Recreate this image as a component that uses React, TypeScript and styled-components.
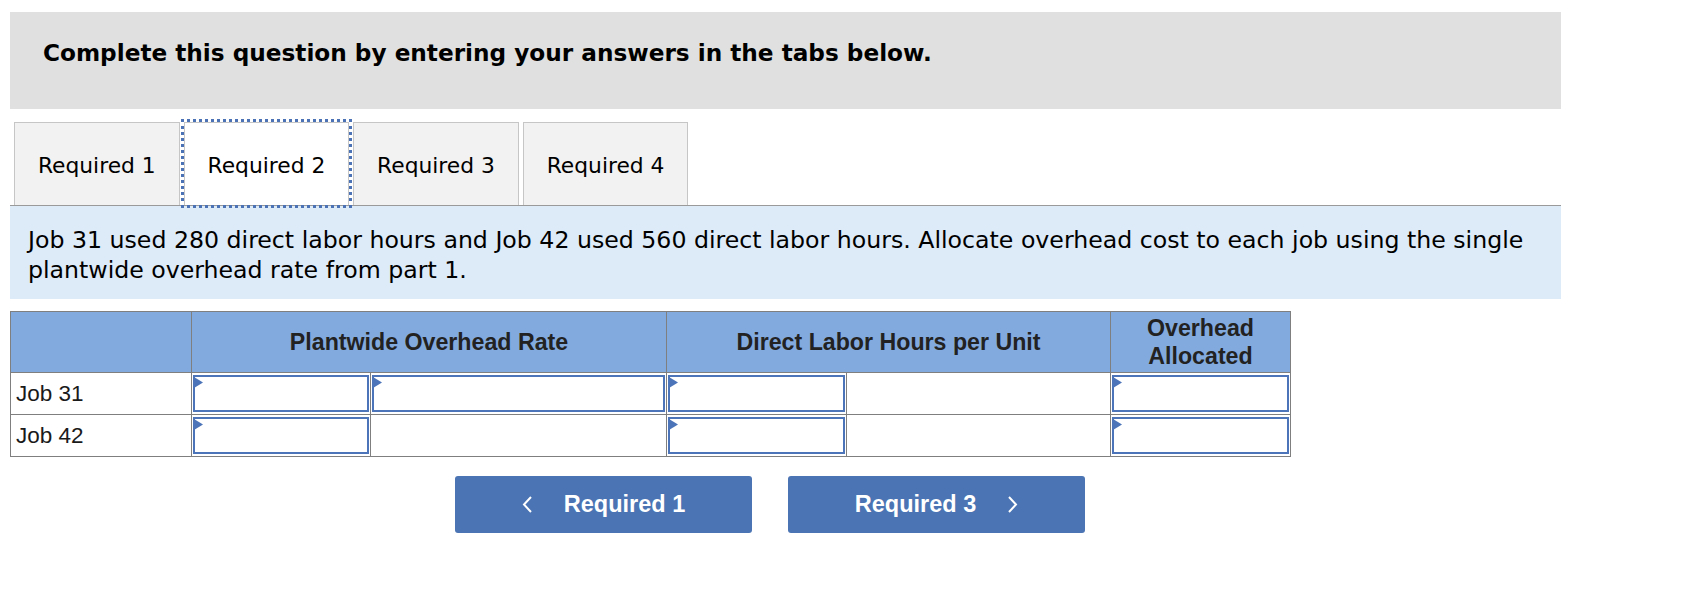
import React from 'react'
import styled, { createGlobalStyle } from 'styled-components'

const GlobalStyle = createGlobalStyle`
  html, body {
    margin: 0;
    padding: 0;
    background: #ffffff;
  }
  body {
    font-family: "DejaVu Sans", Verdana, sans-serif;
    color: #000000;
  }
`

const Page = styled.div`
  padding: 12px 0 40px 10px;
  width: 1551px;
`

const Prompt = styled.div`
  height: 97px;
  box-sizing: border-box;
  background: #e0e0e0;
  padding: 27px 0 0 33px;
  font-family: "DejaVu Sans", Verdana, sans-serif;
  font-weight: bold;
  font-size: 23.2px;
`

const TabBar = styled.div`
  display: flex;
  gap: 4px;
  padding-left: 4px;
  margin-top: 13px;
`

const Tab = styled.button<{ $active?: boolean }>`
  position: relative;
  z-index: 1;
  width: 165.6px;
  height: 83px;
  box-sizing: border-box;
  padding: 2px 0 0;
  border: 1px solid #c6c6c6;
  border-bottom: none;
  background: ${p => (p.$active ? '#ffffff' : '#f2f2f2')};
  outline: ${p => (p.$active ? '3px dotted #4a72b4' : 'none')};
  font-family: "DejaVu Sans", Verdana, sans-serif;
  font-size: 21.8px;
  color: #000000;
  cursor: pointer;
`

const Instructions = styled.div`
  border-top: 1px solid #9a9a9a;
  background: #ddeaf7;
  padding: 19px 16px 14px 18px;
  font-size: 23.65px;
  line-height: 30px;
`

const Grid = styled.table`
  margin-top: 12px;
  border-collapse: collapse;
  table-layout: fixed;
  width: 1280px;
  font-family: "Liberation Sans", Arial, sans-serif;
`

const Head = styled.th`
  height: 60px;
  padding: 0 6px;
  background: #83aadf;
  border: 1px solid #7f7f7f;
  color: #222222;
  font-size: 23.2px;
  font-weight: bold;
  line-height: 28px;
  text-align: center;
  vertical-align: middle;
`

const Label = styled.td`
  height: 39px;
  padding: 0 0 0 5px;
  border: 1px solid #7f7f7f;
  font-size: 22.5px;
  color: #1a1a1a;
  vertical-align: middle;
`

const Cell = styled.td`
  height: 39px;
  padding: 1px;
  border: 1px solid #7f7f7f;
  background: #ffffff;
`

const Entry = styled.div`
  position: relative;
  height: 37px;
  box-sizing: border-box;
  border: 2px solid #4c74b8;
  background: #ffffff;
`

const Marker = styled.svg`
  position: absolute;
  left: -1px;
  top: 0;
`

const Nav = styled.div`
  display: flex;
  gap: 36px;
  margin-top: 19px;
  padding-left: 445px;
`

const NavButton = styled.button`
  display: flex;
  align-items: center;
  justify-content: center;
  gap: 31px;
  width: 297px;
  height: 57px;
  border: none;
  border-radius: 3px;
  background: #4a74b3;
  color: #ffffff;
  font-family: "Liberation Sans", Arial, sans-serif;
  font-weight: bold;
  font-size: 23.5px;
  cursor: pointer;
`

const InputCell: React.FC = () => (
  <Cell>
    <Entry>
      <Marker width="9" height="11" viewBox="0 0 9 11">
        <polygon points="0,0 9,5.5 0,11" fill="#4c74b8" />
      </Marker>
    </Entry>
  </Cell>
)

const Chevron: React.FC<{ dir: 'left' | 'right' }> = ({ dir }) => (
  <svg width="11" height="17" viewBox="0 0 11 17">
    <polyline
      points={dir === 'left' ? '9,1 2,8.5 9,16' : '2,1 9,8.5 2,16'}
      fill="none"
      stroke="#ffffff"
      strokeWidth="2"
    />
  </svg>
)

const tabs = ['Required 1', 'Required 2', 'Required 3', 'Required 4']

const App: React.FC = () => {
  return (
    <Page>
      <GlobalStyle />
      <Prompt>Complete this question by entering your answers in the tabs below.</Prompt>

      <TabBar>
        {tabs.map(t => (
          <Tab key={t} $active={t === 'Required 2'}>{t}</Tab>
        ))}
      </TabBar>

      <Instructions>
        Job 31 used 280 direct labor hours and Job 42 used 560 direct labor hours. Allocate overhead cost to each job
        using the single plantwide overhead rate from part 1.
      </Instructions>

      <Grid>
        <colgroup>
          <col style={{ width: 181 }} />
          <col style={{ width: 179 }} />
          <col style={{ width: 296 }} />
          <col style={{ width: 180 }} />
          <col style={{ width: 264 }} />
          <col style={{ width: 180 }} />
        </colgroup>
        <thead>
          <tr>
            <Head />
            <Head colSpan={2}>Plantwide Overhead Rate</Head>
            <Head colSpan={2}>Direct Labor Hours per Unit</Head>
            <Head>Overhead Allocated</Head>
          </tr>
        </thead>
        <tbody>
          <tr>
            <Label>Job 31</Label>
            <InputCell />
            <InputCell />
            <InputCell />
            <Cell />
            <InputCell />
          </tr>
          <tr>
            <Label>Job 42</Label>
            <InputCell />
            <Cell />
            <InputCell />
            <Cell />
            <InputCell />
          </tr>
        </tbody>
      </Grid>

      <Nav>
        <NavButton>
          <Chevron dir="left" />
          Required 1
        </NavButton>
        <NavButton>
          Required 3
          <Chevron dir="right" />
        </NavButton>
      </Nav>
    </Page>
  )
}

export default App
